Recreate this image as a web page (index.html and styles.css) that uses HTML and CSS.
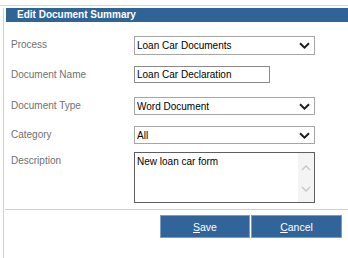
FILE: index.html
```html
<!DOCTYPE html>
<html lang="en">
<head>
    <meta charset="UTF-8">
    <title>Edit Document Summary</title>
    <link rel="stylesheet" href="styles.css">
</head>
<body>
    <div class="topline"></div>
    <div class="panel">
        <div class="title">Edit Document Summary</div>

        <!-- form rows -->
        <div class="form">
            <div class="row r1">
                <label class="lbl">Process</label>
                <div class="sel">
                    <select><option>Loan Car Documents</option></select>
                    <svg width="11" height="7" viewBox="0 0 11 7"><path d="M1 1.2 L5.5 5.6 L10 1.2" fill="none" stroke="#1e1e1e" stroke-width="2"/></svg>
                </div>
            </div>
            <div class="row r2">
                <label class="lbl">Document Name</label>
                <input type="text" class="txt" value="Loan Car Declaration">
            </div>
            <div class="row r3">
                <label class="lbl">Document Type</label>
                <div class="sel">
                    <select><option>Word Document</option></select>
                    <svg width="11" height="7" viewBox="0 0 11 7"><path d="M1 1.2 L5.5 5.6 L10 1.2" fill="none" stroke="#1e1e1e" stroke-width="2"/></svg>
                </div>
            </div>
            <div class="row r4">
                <label class="lbl">Category</label>
                <div class="sel">
                    <select><option>All</option></select>
                    <svg width="11" height="7" viewBox="0 0 11 7"><path d="M1 1.2 L5.5 5.6 L10 1.2" fill="none" stroke="#1e1e1e" stroke-width="2"/></svg>
                </div>
            </div>
            <div class="row">
                <label class="lbl">Description</label>
                <div class="area">
                    <textarea>New loan car form</textarea>
                    <div class="sbar">
                        <svg width="10" height="6" viewBox="0 0 10 6"><path d="M1 5 L5 1 L9 5" fill="none" stroke="#c4c4c4" stroke-width="1.3"/></svg>
                        <svg width="10" height="6" viewBox="0 0 10 6"><path d="M1 1 L5 5 L9 1" fill="none" stroke="#c4c4c4" stroke-width="1.3"/></svg>
                    </div>
                </div>
            </div>
        </div>

        <div class="sep"></div>
        <div class="buttons">
            <button type="button" class="btn btn_save"><u>S</u>ave</button>
            <button type="button" class="btn btn_cancel"><u>C</u>ancel</button>
        </div>
    </div>
</body>
</html>
```
FILE: styles.css
```css
body{
    margin: 0;
    background: #fff;
    font-family: "Liberation Sans", Arial, sans-serif;
    font-size: 10px;
    color: #000;
}
.topline{margin-top: 5px; height: 1px; background-color: #d6d6d6;}
.panel{
    margin: 2px 0 0 3px; height: 250px;
    border-left: 1px solid #cfcfcf;
}
.title{
    margin: 1px 0 0 2px; height: 14px; line-height: 14px;
    padding-left: 11px;
    background-color: #2f6496; color: #fff;
    font-weight: bold; font-size: 10px;
}
.form{padding: 14px 0 0 7px;}
.row{display: flex; align-items: flex-start;}
.r1{height: 30px;}
.r2{height: 31px;}
.r3{height: 29px;}
.r4{height: 26px;}
.lbl{width: 123px; padding-top: 3px; color: #707070; font-size: 10px;}

/* select boxes */
.sel{
    display: flex; align-items: center;
    width: 179px; height: 16px;
    border: 1px solid #a6a6a6; background: #fff;
}
.r1 .sel{height: 17px;}
.sel select{
    flex: 1; -webkit-appearance: none; appearance: none;
    border: none; background: transparent; outline: none;
    font-family: inherit; font-size: 10px; color: #000;
    padding: 0 0 0 2px; margin: 0; height: 100%;
}
.sel svg{margin-right: 4px;}

.txt{
    width: 130px; height: 15px; padding: 0 2px; margin: 0;
    border: 1px solid #8a8a8a;
    font-family: inherit; font-size: 10px; color: #000;
}

/* description */
.area{
    display: flex; width: 179px; height: 49px;
    border: 1px solid #5e5e5e; background: #fff;
}
.area textarea{
    flex: 1; border: none; resize: none; outline: none; overflow: hidden;
    font-family: inherit; font-size: 10px; padding: 3px 2px; margin: 0;
}
.sbar{
    width: 16px; background-color: #f4f4f4;
    display: flex; flex-direction: column; align-items: center;
    padding-top: 12px; gap: 15px;
}

.sep{margin: 6px 0 0 1px; height: 1px; background-color: #cfcfcf;}
.buttons{display: flex; justify-content: flex-end; gap: 1px; padding: 5px 6px 0 0;}
.btn{
    height: 23px; margin: 0; padding: 0;
    border: 1px solid #7d9dbd; background-color: #31659a; color: #fff;
    font-family: inherit; font-size: 10.5px;
}
.btn_save{width: 90px;}
.btn_cancel{width: 91px;}
```
